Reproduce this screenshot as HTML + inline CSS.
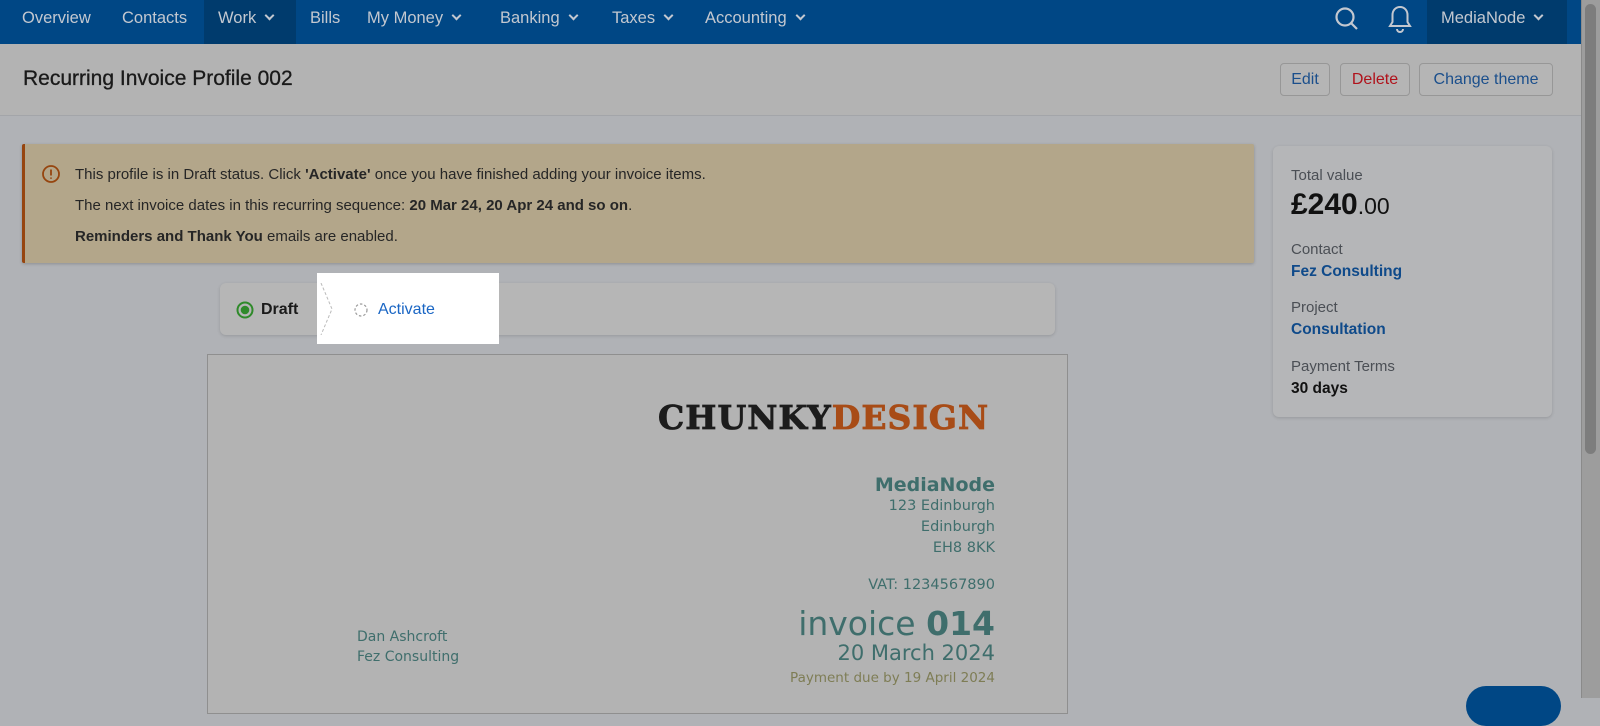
<!DOCTYPE html>
<html><head><meta charset="utf-8"><style>
*{margin:0;padding:0;box-sizing:border-box}
body{width:1600px;height:698px;overflow:hidden;font-family:"Liberation Sans",sans-serif;background:#b0b2b6;position:relative}
.abs{position:absolute}
.nav{left:0;top:0;width:1581px;height:44px;background:#004785}
.nav span{position:absolute;top:0;line-height:36px;font-size:16.5px;color:#c3c8d0}
.chev{display:inline-block;width:7px;height:7px;border-right:2px solid #c3c8d0;border-bottom:2px solid #c3c8d0;transform:rotate(45deg);margin-left:10px;position:relative;top:-4px}
.scroll{left:1581px;top:0;width:19px;height:698px;background:#9d9d9d;border-left:1px solid #8a8a8a}
.thumb{left:1585px;top:4px;width:11px;height:450px;background:#7d7d7d;border-radius:6px}
.header{left:0;top:44px;width:1581px;height:72px;background:#b3b3b3;border-bottom:1px solid #a3a5a9}
.btn{position:absolute;top:63px;height:33px;border:1px solid #979797;border-radius:4px;font-size:16px;line-height:31px;text-align:center;color:#1b4f8c;background:#b5b5b5}
.alert{left:22px;top:144px;width:1232px;height:119px;background:#b3a68a;border-left:3px solid #96450f;box-shadow:0 1px 3px rgba(0,0,0,.2);border-radius:2px}
.alert p{position:absolute;left:50px;font-size:15px;color:#262626}
.card{background:#b5b6b8;border-radius:6px;box-shadow:0 1px 3px rgba(0,0,0,.15)}
.rc p{position:absolute;left:18px;font-size:15px;color:#4b4f55}
.rc a{position:absolute;left:18px;font-size:15.5px;color:#0f4a8a;font-weight:bold;text-decoration:none}
.inv{font-family:"DejaVu Sans","Liberation Sans",sans-serif;color:#3f6e6c;text-align:right;position:absolute;right:605px;white-space:nowrap}
</style></head><body>
<div class="abs nav">
<span style="left:22px">Overview</span>
<span style="left:122px">Contacts</span>
<span style="left:204px;width:92px;height:44px;background:#003b6d;padding-left:14px">Work<i class="chev"></i></span>
<span style="left:310px">Bills</span>
<span style="left:367px">My Money<i class="chev"></i></span>
<span style="left:500px">Banking<i class="chev"></i></span>
<span style="left:612px">Taxes<i class="chev"></i></span>
<span style="left:705px">Accounting<i class="chev"></i></span>
<svg class="abs" style="left:1333px;top:5px" width="28" height="28" viewBox="0 0 28 28" fill="none" stroke="#c3c8d0" stroke-width="2.2"><circle cx="12" cy="12" r="8.5"/><path d="M18 18l6 6"/></svg>
<svg class="abs" style="left:1387px;top:4px" width="26" height="30" viewBox="0 0 26 30" fill="none" stroke="#c3c8d0" stroke-width="2"><path d="M13 3c-5 0-7.5 4-7.5 8v7L3 22h20l-2.5-4v-7c0-4-2.5-8-7.5-8z"/><path d="M10 25a3 3 0 0 0 6 0"/></svg>
<span style="left:1427px;width:140px;height:44px;background:#003b6d;padding-left:14px">MediaNode<i class="chev"></i></span>
</div>
<div class="abs scroll"></div><div class="abs thumb"></div>
<div class="abs header"></div>
<div class="abs" style="left:23px;top:67px;font-size:21px;color:#1a1a1a;-webkit-text-stroke:0.3px #1a1a1a">Recurring Invoice Profile 002</div>
<div class="btn" style="left:1280px;width:50px">Edit</div>
<div class="btn" style="left:1340px;width:70px;color:#b0121b">Delete</div>
<div class="btn" style="left:1419px;width:134px">Change theme</div>

<div class="abs alert">
<svg class="abs" style="left:16px;top:20px" width="20" height="20" viewBox="0 0 20 20" fill="none" stroke="#96450f" stroke-width="1.8"><circle cx="10" cy="10" r="8"/><path d="M10 5.5v6M10 13.5v1.2"/></svg>
<p style="top:22px">This profile is in Draft status. Click <b>'Activate'</b> once you have finished adding your invoice items.</p>
<p style="top:53px">The next invoice dates in this recurring sequence: <b>20 Mar 24, 20 Apr 24 and so on</b>.</p>
<p style="top:84px"><b>Reminders and Thank You</b> emails are enabled.</p>
</div>

<div class="abs card rc" style="left:1273px;top:146px;width:279px;height:271px">
<p style="top:21px">Total value</p>
<div class="abs" style="left:18px;top:42px;font-size:30px;color:#111;font-weight:bold">£240<span style="font-size:23px;font-weight:normal">.00</span></div>
<p style="top:95px">Contact</p><a style="top:117px">Fez Consulting</a>
<p style="top:153px">Project</p><a style="top:175px">Consultation</a>
<p style="top:212px">Payment Terms</p>
<div class="abs" style="left:18px;top:234px;font-size:15.5px;font-weight:bold;color:#111">30 days</div>
</div>

<div class="abs card" style="left:220px;top:283px;width:835px;height:52px;background:#b6b6b6"></div>
<div class="abs" style="left:317px;top:273px;width:182px;height:71px;background:#fff"></div>
<svg class="abs" style="left:236px;top:301px" width="18" height="18" viewBox="0 0 18 18"><circle cx="9" cy="9" r="7.5" fill="none" stroke="#2f8a2a" stroke-width="2"/><circle cx="9" cy="9" r="4.3" fill="#2f8a2a"/></svg>
<div class="abs" style="left:261px;top:301px;font-size:16px;font-weight:bold;color:#1a1a1a">Draft</div>
<svg class="abs" style="left:320px;top:283px" width="16" height="52" viewBox="0 0 16 52" fill="none" stroke="#bbb" stroke-width="1" stroke-dasharray="3 2"><path d="M1 0l11 26L1 52"/></svg>
<svg class="abs" style="left:354px;top:303px" width="14" height="14" viewBox="0 0 14 14"><circle cx="7" cy="7" r="6" fill="none" stroke="#999" stroke-width="1.2" stroke-dasharray="2.5 2"/></svg>
<div class="abs" style="left:378px;top:301px;font-size:16px;color:#1a66c4">Activate</div>

<div class="abs" style="left:207px;top:354px;width:861px;height:360px;background:#b3b3b3;border:1px solid #8f8f8f"></div>
<div class="abs" style="left:658px;top:398px;font-family:'DejaVu Serif','Liberation Serif',serif;font-weight:bold;font-size:33px;letter-spacing:1px;white-space:nowrap;-webkit-text-stroke:0.8px currentColor"><span style="color:#1c1c1c">CHUNKY</span><span style="color:#a84c17">DESIGN</span></div>
<div class="inv" style="top:474px;font-size:19px;font-weight:bold">MediaNode</div>
<div class="inv" style="top:496px;font-size:14.5px;line-height:21px">123 Edinburgh<br>Edinburgh<br>EH8 8KK</div>
<div class="inv" style="top:577px;font-size:14.5px">VAT: 1234567890</div>
<div class="inv" style="top:604px;font-size:33px">invoice <b>014</b></div>
<div class="inv" style="top:641px;font-size:21px">20 March 2024</div>
<div class="inv" style="top:670px;font-size:13.5px;color:#7e7d55">Payment due by 19 April 2024</div>
<div class="abs" style="left:357px;top:627px;font-family:'DejaVu Sans',sans-serif;font-size:14px;line-height:20px;color:#3f6e6c">Dan Ashcroft<br>Fez Consulting</div>
<div class="abs" style="left:1466px;top:686px;width:95px;height:40px;background:#004785;border-radius:20px"></div>
</body></html>
